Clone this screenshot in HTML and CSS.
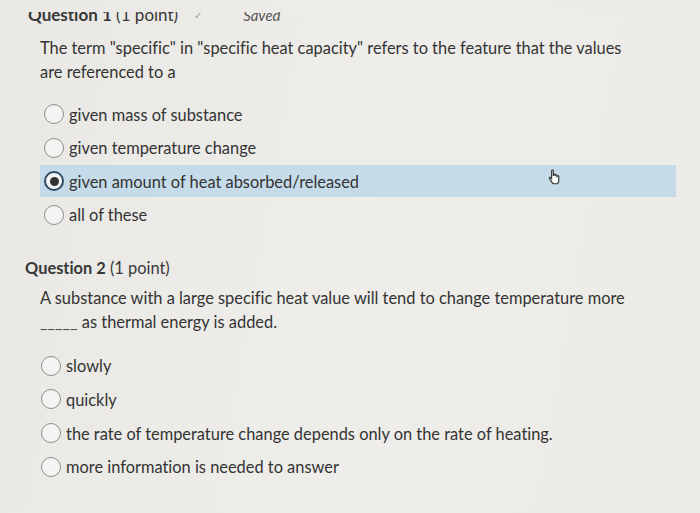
FILE: index.html
```html
<!DOCTYPE html>
<html>
<head>
<meta charset="utf-8">
<link rel="stylesheet" href="styles.css">
</head>
<body>
<div class="page">
  <div class="top-band"></div>
  <div class="q-head q-head-top">
    <span class="q-title"><b>Question 1</b> (1 point)</span>
    <span class="check">&#10003;</span>
    <span class="saved">Saved</span>
  </div>
  <p class="prompt">The term "specific" in "specific heat capacity" refers to the feature that the values are referenced to a</p>
  <div class="options opts1">
    <label class="opt"><span class="radio"></span><span>given mass of substance</span></label>
    <label class="opt"><span class="radio"></span><span>given temperature change</span></label>
    <label class="opt selected"><span class="radio"><span class="dot"></span></span><span>given amount of heat absorbed/released</span>
      <svg class="cursor" width="18" height="18" viewBox="0 0 16 16"><path d="M5 2.5c0-.8 1.5-.8 1.5 0V7l.2-1c.2-.8 1.4-.7 1.4.1v1l.3-.6c.3-.7 1.4-.5 1.4.3v.8l.3-.4c.4-.5 1.3-.2 1.3.5v3.3c0 1.8-1.2 3-3 3H7.3c-.9 0-1.6-.5-2-1.2L3 9.2c-.4-.7.5-1.4 1.1-.8L5 9.5z" fill="#fff" stroke="#333" stroke-width="1"/></svg>
    </label>
    <label class="opt"><span class="radio"></span><span>all of these</span></label>
  </div>

  <div class="q-head q2-head"><b>Question 2</b> (1 point)</div>
  <p class="prompt prompt2">A substance with a large specific heat value will tend to change temperature more <span class="blank">_____</span> as thermal energy is added.</p>
  <div class="options opts2">
    <label class="opt"><span class="radio"></span><span>slowly</span></label>
    <label class="opt"><span class="radio"></span><span>quickly</span></label>
    <label class="opt"><span class="radio"></span><span>the rate of temperature change depends only on the rate of heating.</span></label>
    <label class="opt"><span class="radio"></span><span>more information is needed to answer</span></label>
  </div>
</div>
</body>
</html>
```
FILE: styles.css
```css
html, body {
  margin: 0;
  padding: 0;
}
body {
  background: linear-gradient(100deg, #e9e8e4 0%, #eeedea 50%, #ecebe7 100%);
  font-family: Lato, "Open Sans", sans-serif;
  font-variant-ligatures: none;
  color: #333;
  width: 700px;
  height: 513px;
  overflow: hidden;
}
.page {
  position: relative;
}
.top-band {
  position: relative;
  z-index: 1;
  height: 12px;
  background: linear-gradient(100deg, #e9e8e4 0%, #eeedea 50%, #ecebe7 100%);
}
.q-head {
  font-size: 17px;
  color: #383838;
}
.q-head b {
  font-weight: 700;
}
.q-head-top {
  margin-top: -12px;
  padding-top: 1px;
  padding-left: 28px;
  height: 28px;
  line-height: 28px;
  display: flex;
  align-items: center;
}
.check {
  font-size: 10px;
  color: #999;
  margin-left: 16px;
}
.saved {
  font-style: italic;
  font-size: 15px;
  color: #555;
  margin-left: 41px;
}
.prompt {
  margin: 7px 0 0 40px;
  width: 600px;
  font-size: 16.4px;
  line-height: 24px;
}
.options {
  display: flex;
  flex-direction: column;
}
.opts1 {
  margin: 14px 0 0 40px;
  width: 636px;
  gap: 1.5px;
}
.opt {
  display: flex;
  align-items: center;
  height: 32px;
  font-size: 16.4px;
  position: relative;
}
.opts1 .opt .radio {
  margin-left: 4px;
  margin-right: 5px;
}
.radio {
  width: 20px;
  height: 20px;
  box-sizing: border-box;
  border: 1.3px solid #8c8c8c;
  border-radius: 50%;
  background: #f4f4f2;
  display: flex;
  align-items: center;
  justify-content: center;
}
.selected {
  background: #c6dbe9;
}
.selected .radio {
  border: 2px solid #2e4b66;
  background: #f2f4f6;
}
.dot {
  width: 9px;
  height: 9px;
  border-radius: 50%;
  background: #333;
}
.cursor {
  position: absolute;
  left: 506px;
  top: 3px;
}
.q2-head {
  margin: 25px 0 0 25px;
  font-size: 16.4px;
  line-height: 24px;
}
.prompt2 {
  margin-top: 6px;
}
.blank {
  color: #555;
}
.opts2 {
  margin: 16px 0 0 40px;
  gap: 1.8px;
}
.opts2 .opt .radio {
  margin-left: 1px;
  margin-right: 5px;
}
```
